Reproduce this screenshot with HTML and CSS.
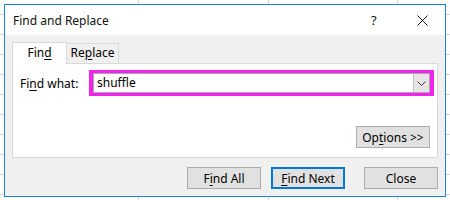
FILE: index.html
```html
<!DOCTYPE html>
<html lang="en">
<head>
  <meta charset="UTF-8">
  <title>Find and Replace</title>
  <link rel="stylesheet" href="styles.css">
</head>
<body>
  <div class="dialog" role="dialog" aria-labelledby="dlg-title">
    <!-- Title bar -->
    <div class="titlebar">
      <span class="title" id="dlg-title">Find and Replace</span>
      <span class="help">?</span>
      <span class="close-x" aria-label="Close">
        <svg width="11" height="11" viewBox="0 0 11 11">
          <path d="M0.5 0.5 L10.5 10.5 M10.5 0.5 L0.5 10.5" stroke="#111" stroke-width="1" fill="none"/>
        </svg>
      </span>
    </div>

    <div class="client">
      <!-- Tabs -->
      <div class="tabs">
        <div class="tab active">Fin<u>d</u></div>
        <div class="tab">Re<u>p</u>lace</div>
      </div>

      <!-- Tab panel -->
      <div class="panel">
        <div class="find-row">
          <label class="label">Fi<u>n</u>d what:</label>
          <div class="highlight">
            <div class="combo">
              <span class="combo-text">shuffle</span>
              <span class="combo-btn">
                <svg width="9" height="5" viewBox="0 0 9 5">
                  <path d="M0.5 0.5 L4.5 4.5 L8.5 0.5" stroke="#333" stroke-width="1" fill="none"/>
                </svg>
              </span>
            </div>
          </div>
        </div>
        <div class="options-row">
          <button class="btn">Op<u>t</u>ions &gt;&gt;</button>
        </div>
      </div>

      <!-- Buttons -->
      <div class="button-row">
        <button class="btn">F<u>i</u>nd All</button>
        <button class="btn default"><u>F</u>ind Next</button>
        <button class="btn close-btn">Close</button>
      </div>
    </div>
  </div>
</body>
</html>
```

FILE: styles.css
```css
* {
  margin: 0;
  padding: 0;
  box-sizing: border-box;
}

html, body {
  width: 450px;
  height: 200px;
  overflow: hidden;
}

/* spreadsheet grid behind the dialog */
body {
  font-family: "Noto Sans", "Open Sans", sans-serif;
  font-size: 12px;
  color: #000;
  background-color: #fff;
  background-image:
    linear-gradient(to right, transparent 138px, #d4d4d4 138px, #d4d4d4 139px, transparent 139px,
                    transparent 268px, #d4d4d4 268px, #d4d4d4 269px, transparent 269px,
                    transparent 397px, #d4d4d4 397px, #d4d4d4 398px, transparent 398px),
    repeating-linear-gradient(to bottom, transparent 0, transparent 19px, #d4d4d4 19px, #d4d4d4 20px);
  background-position: 0 0, 0 -5px;
  padding: 4px 0 0 4px;
}

u {
  text-decoration: underline;
  text-underline-offset: 2px;
}

.dialog {
  width: 442px;
  height: 193px;
  border: 1px solid #1883d7;
  background: #f0f0f0;
  display: flex;
  flex-direction: column;
}

/* Title bar */
.titlebar {
  height: 30px;
  background: #fff;
  display: flex;
  align-items: center;
  padding-left: 8px;
}

.title {
  flex: 1;
  font-size: 12px;
  color: #111;
}

.help {
  font-size: 13px;
  width: 12px;
  margin-right: 34px;
  color: #111;
}

.close-x {
  display: flex;
  width: 11px;
  height: 11px;
  margin-right: 17px;
  margin-top: 1px;
}

/* Client area */
.client {
  padding: 7px 7px 0 7px;
}

.tabs {
  display: flex;
  align-items: flex-end;
  height: 21px;
}

.tab {
  height: 20px;
  width: 53px;
  margin-left: -1px;
  border: 1px solid #d9d9d9;
  border-bottom: none;
  background: #f0f0f0;
  text-align: center;
  line-height: 18px;
}

.tab.active {
  width: 55px;
  height: 22px;
  margin-left: 0;
  margin-bottom: -1px;
  background: #fff;
  position: relative;
  z-index: 1;
  line-height: 20px;
}

.panel {
  height: 95px;
  border: 1px solid #d9d9d9;
  background: #fff;
  padding: 6px 3px 0 7px;
  display: flex;
  flex-direction: column;
}

.find-row {
  display: flex;
  align-items: center;
}

.label {
  width: 69px;
}

.highlight {
  border-style: solid;
  border-color: #f322ee;
  border-width: 3px 4px;
  width: 345px;
}

.combo {
  height: 20px;
  border: 1px solid #a8a8a8;
  display: flex;
  align-items: stretch;
  background: #fff;
}

.combo-text {
  flex: 1;
  padding-left: 3px;
  line-height: 18px;
}

.combo-btn {
  width: 16px;
  background: #e5e5e5;
  border-left: 1px solid #c4c4c4;
  display: flex;
  align-items: center;
  justify-content: center;
}

.options-row {
  display: flex;
  justify-content: flex-end;
  margin-top: 30px;
  padding-right: 4px;
}

/* Buttons */
.btn {
  width: 74px;
  height: 22px;
  font-family: inherit;
  font-size: 12px;
  color: #000;
  background: #e1e1e1;
  border: 1px solid #adadad;
}

.btn.default {
  border: 2px solid #0078d7;
}

.button-row {
  display: flex;
  justify-content: flex-end;
  gap: 10px;
  margin-top: 9px;
  padding-right: 0;
}

.close-btn {
  margin-left: 9px;
}
```
